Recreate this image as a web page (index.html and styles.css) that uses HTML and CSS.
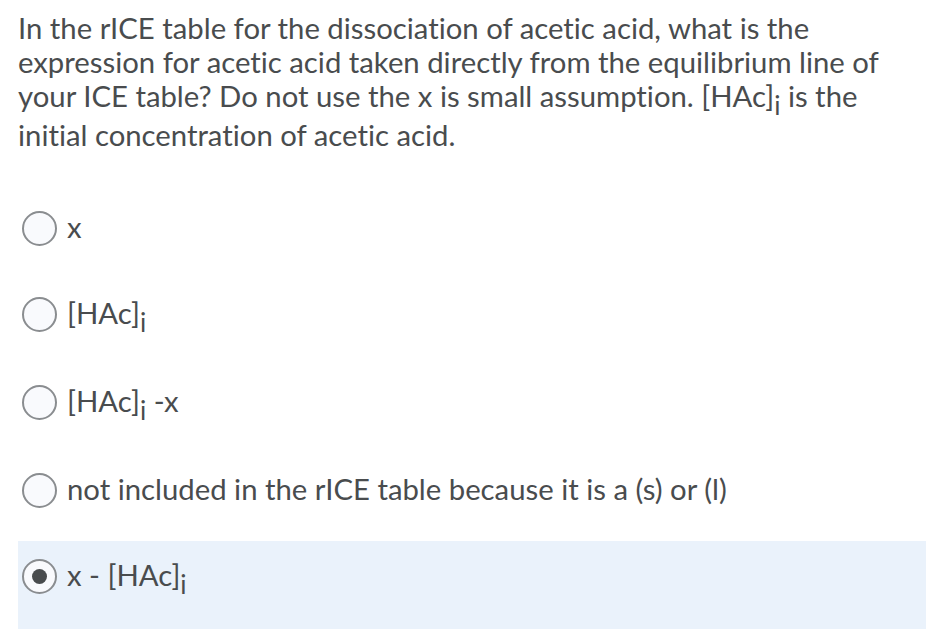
FILE: index.html
```html
<!DOCTYPE html>
<html>
<head>
<meta charset="utf-8">
<link rel="stylesheet" href="styles.css">
</head>
<body>
<div class="question">
  <p class="stem">In the rICE table for the dissociation of acetic acid, what is the expression for acetic acid taken directly from the equilibrium line of your ICE table? Do not use the x is small assumption. [HAc]<sub>i</sub> is the initial concentration of acetic acid.</p>
  <div class="options">
    <label class="option"><span class="radio"></span><span class="text">x</span></label>
    <label class="option"><span class="radio"></span><span class="text">[HAc]<sub>i</sub></span></label>
    <label class="option"><span class="radio"></span><span class="text">[HAc]<sub>i</sub> -x</span></label>
    <label class="option"><span class="radio"></span><span class="text">not included in the rICE table because it is a (s) or (l)</span></label>
    <label class="option selected"><span class="radio checked"></span><span class="text">x - [HAc]<sub>i</sub></span></label>
  </div>
</div>
</body>
</html>
```

FILE: styles.css
```css
html, body {
  margin: 0;
  padding: 0;
  background: #ffffff;
}
body {
  font-family: Lato, "Noto Sans", sans-serif;
  font-size: 29.3px;
  color: #494c4e;
  font-variant-ligatures: none;
}
.question {
  padding: 11px 0 0 18px;
}
.stem {
  margin: 0;
  line-height: 34px;
  padding-right: 4px;
}
.stem sub {
  font-size: 26px;
  vertical-align: -8px;
  line-height: 26px;
}
.options {
  margin-top: 41px;
  display: flex;
  flex-direction: column;
}
.option {
  display: flex;
  align-items: flex-start;
  gap: 10px;
  padding: 17px 0 33px 4px;
  line-height: 34px;
}
.option.selected {
  background: #eaf2fb;
}
.option sub {
  font-size: 26px;
  vertical-align: -8px;
  line-height: 23px;
}
.radio {
  flex: none;
  margin-top: 1px;
  width: 31px;
  height: 31px;
  border: 2px solid #8a8d90;
  border-radius: 50%;
  background: #f9fafd;
  display: flex;
  align-items: center;
  justify-content: center;
}
.radio.checked::after {
  content: "";
  width: 15px;
  height: 15px;
  border-radius: 50%;
  background: #494c4e;
}
```
